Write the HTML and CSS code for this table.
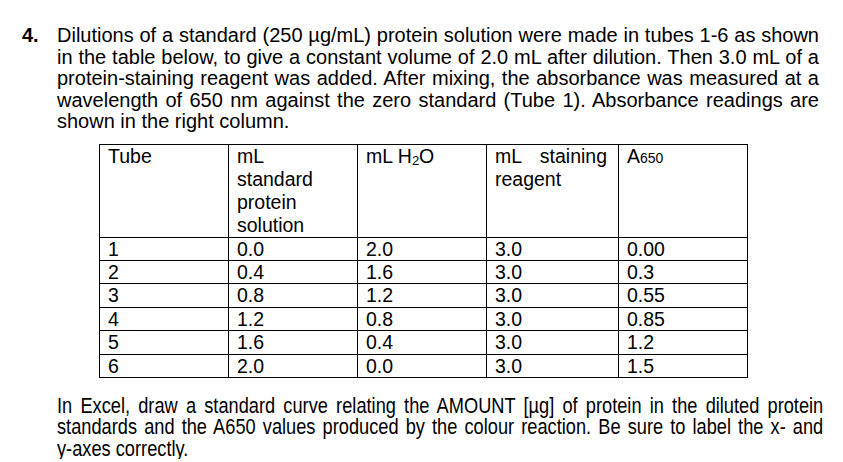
FILE: index.html
```
<!DOCTYPE html>
<html lang="en">
<head>
  <meta charset="UTF-8">
  <meta name="viewport" content="width=device-width, initial-scale=1.0">
  <title>Protein Standard Curve</title>
  <link rel="stylesheet" href="styles.css">
</head>
<body>
  <div class="question">
    <div class="num">4.</div>
    <div class="content">
      <p class="intro">Dilutions of a standard (250 µg/mL) protein solution were made in tubes 1-6 as shown in the table below, to give a constant volume of 2.0 mL after dilution. Then 3.0 mL of a protein-staining reagent was added. After mixing, the absorbance was measured at a wavelength of 650 nm against the zero standard (Tube 1). Absorbance readings are shown in the right column.</p>

      <table class="data">
        <thead>
          <tr>
            <th>Tube</th>
            <th>mL<br>standard<br>protein<br>solution</th>
            <th>mL H<sub>2</sub>O</th>
            <th class="just">mL staining reagent</th>
            <th>A<sub class="small">650</sub></th>
          </tr>
        </thead>
        <tbody>
          <tr><td>1</td><td>0.0</td><td>2.0</td><td>3.0</td><td>0.00</td></tr>
          <tr><td>2</td><td>0.4</td><td>1.6</td><td>3.0</td><td>0.3</td></tr>
          <tr><td>3</td><td>0.8</td><td>1.2</td><td>3.0</td><td>0.55</td></tr>
          <tr><td>4</td><td>1.2</td><td>0.8</td><td>3.0</td><td>0.85</td></tr>
          <tr><td>5</td><td>1.6</td><td>0.4</td><td>3.0</td><td>1.2</td></tr>
          <tr><td>6</td><td>2.0</td><td>0.0</td><td>3.0</td><td>1.5</td></tr>
        </tbody>
      </table>

      <!-- narrow face isn't installed, so squeeze the paragraph sideways -->
      <div class="task-wrap">
        <p class="task">In Excel, draw a standard curve relating the AMOUNT [µg] of protein in the diluted protein standards and the A650 values produced by the colour reaction. Be sure to label the x- and <span class="nobr">y-axes</span> correctly.</p>
      </div>
    </div>
  </div>
</body>
</html>
```

FILE: styles.css
```
body {
  margin: 0;
  background: #fff;
  color: #000;
  font-family: "Liberation Sans", Arial, sans-serif;
  overflow: hidden;
}
.question {
  display: flex;
  padding: 25px 24px 0 22px;
}
.num {
  width: 35px;
  flex: none;
  font-weight: bold;
  font-size: 20px;
  line-height: 21.5px;
}
.content {
  flex: 1;
  min-width: 0;
}
.intro {
  margin: 0;
  font-size: 20px;
  line-height: 21.5px;
  text-align: justify;
}
.data {
  margin: 11px 0 0 42px;
  border-collapse: collapse;
  font-size: 19.5px;
  table-layout: fixed;
  width: 646px;
}
.data th, .data td {
  border: 1px solid #000;
  width: 112px;
  padding: 0 8px;
  text-align: left;
  vertical-align: top;
}
.data th {
  font-weight: normal;
  line-height: 23px;
}
.data td {
  line-height: 22.4px;
}
.data th.just {
  text-align: justify;
  padding-right: 11px;
}
.data sub {
  font-size: 13px;
  vertical-align: -2px;
  line-height: 0;
}
.data sub.small {
  vertical-align: 0;
  font-size: 14px;
}
.task-wrap {
  width: 766px;
  margin-top: 17px;
}
.task {
  margin: 0;
  width: 946px;
  transform: scaleX(0.81);
  transform-origin: left top;
  font-size: 22.5px;
  line-height: 21.5px;
  text-align: justify;
}
.nobr {
  white-space: nowrap;
}
```
